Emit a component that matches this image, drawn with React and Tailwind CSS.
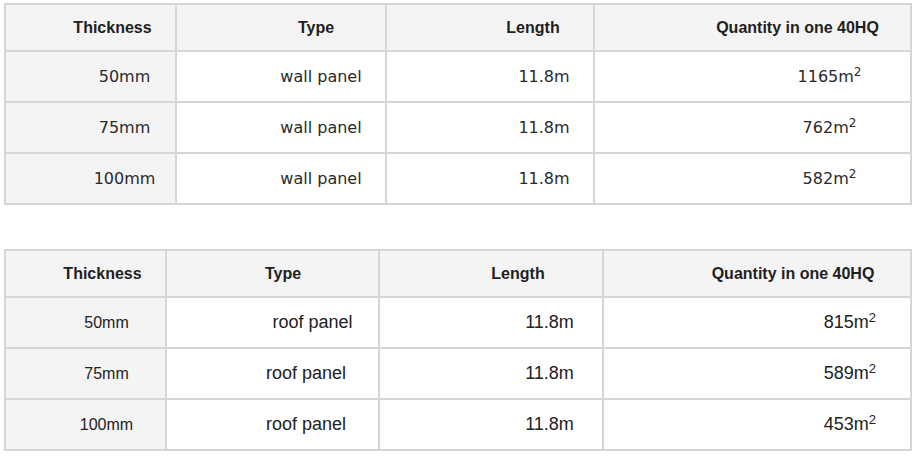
const wallRows = [
  { t: "50mm", type: "wall panel", len: "11.8m", q: "1165" },
  { t: "75mm", type: "wall panel", len: "11.8m", q: "762" },
  { t: "100mm", type: "wall panel", len: "11.8m", q: "582" },
];

const roofRows = [
  { t: "50mm", type: "roof panel", len: "11.8m", q: "815", typePad: "pl-[80px]" },
  { t: "75mm", type: "roof panel", len: "11.8m", q: "589", typePad: "pl-[67px]" },
  { t: "100mm", type: "roof panel", len: "11.8m", q: "453", typePad: "pl-[67px]" },
];

const head = "bg-[#f4f4f4] border-2 border-[#d6d6d6] text-center font-bold text-[16px] text-[#1f1f1f] font-['Liberation_Sans',Arial,sans-serif]";
const cell = "border-2 border-[#d6d6d6] text-center";

const App = () => {
  return (
    <div className="w-[920px] h-[460px] bg-white pl-[4px] pt-[3px]">
      {/* wall panels */}
      <table className="table-fixed border-collapse w-[908px]">
        <colgroup>
          <col className="w-[171px]" />
          <col className="w-[210px]" />
          <col className="w-[208px]" />
          <col />
        </colgroup>
        <thead>
          <tr className="h-[47px]">
            <th className={`${head} pl-[44px]`}>Thickness</th>
            <th className={`${head} pl-[70px]`}>Type</th>
            <th className={`${head} pl-[86px]`}>Length</th>
            <th className={`${head} pl-[90px]`}>Quantity in one 40HQ</th>
          </tr>
        </thead>
        <tbody className="text-[16px] text-[#2a2a2a] font-['DejaVu_Sans',Verdana,sans-serif]">
          {wallRows.map((r) => (
            <tr key={r.t} className="h-[51px]">
              <td className={`${cell} bg-[#f4f4f4] pl-[68px]`}>{r.t}</td>
              <td className={`${cell} pl-[80px]`}>{r.type}</td>
              <td className={`${cell} pl-[108px]`}>{r.len}</td>
              <td className={`${cell} pl-[154px]`}>
                {r.q}m<sup className="text-[12px]">2</sup>
              </td>
            </tr>
          ))}
        </tbody>
      </table>

      {/* roof panels */}
      <table className="table-fixed border-collapse w-[908px] mt-[44px]">
        <colgroup>
          <col className="w-[161px]" />
          <col className="w-[213px]" />
          <col className="w-[224px]" />
          <col />
        </colgroup>
        <thead>
          <tr className="h-[47px]">
            <th className={`${head} pl-[34px]`}>Thickness</th>
            <th className={`${head} pl-[21px]`}>Type</th>
            <th className={`${head} pl-[54px]`}>Length</th>
            <th className={`${head} pl-[72px]`}>Quantity in one 40HQ</th>
          </tr>
        </thead>
        <tbody className="text-[18px] text-[#222] font-['Liberation_Sans',Arial,sans-serif]">
          {roofRows.map((r) => (
            <tr key={r.t} className="h-[51px]">
              <td className={`${cell} bg-[#f4f4f4] pl-[42px] text-[16px]`}>{r.t}</td>
              <td className={`${cell} ${r.typePad}`}>{r.type}</td>
              <td className={`${cell} pl-[117px]`}>{r.len}</td>
              <td className={`${cell} !text-right pr-[34px]`}>
                {r.q}m<sup className="text-[13px]">2</sup>
              </td>
            </tr>
          ))}
        </tbody>
      </table>
    </div>
  );
};

export default App;
